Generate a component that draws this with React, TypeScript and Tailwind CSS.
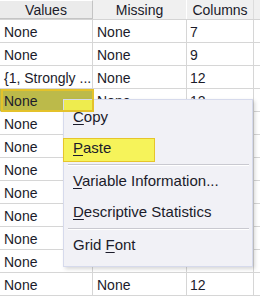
const rows = [
  ["None", "None", "7"],
  ["None", "None", "9"],
  ["{1, Strongly ...", "None", "12"],
  ["None", "None", "12"],
  ["None", "None", "12"],
  ["None", "None", "12"],
  ["None", "None", "12"],
  ["None", "None", "12"],
  ["None", "None", "12"],
  ["None", "None", "12"],
  ["None", "None", "12"],
  ["None", "None", "12"],
];

function MenuItem({ lead, rest, highlight }: { lead: string; rest: string; highlight?: boolean }) {
  return (
    <div className="relative flex h-[31px] items-center pl-[9px]">
      {highlight ? (
        <div className="absolute left-[-1px] top-[5px] h-[24px] w-[92px] border border-[#e6c52a] bg-[#f6f35a]" />
      ) : null}
      <span className="relative">
        <span className="underline decoration-1 underline-offset-2">{lead}</span>
        {rest}
      </span>
    </div>
  );
}

export default function App() {
  return (
    <div className="relative h-[300px] w-[260px] overflow-hidden bg-white font-['Liberation_Sans',Arial,sans-serif] text-[14px] text-[#1b1b2a]">
      <div className="flex h-[20px] border-b border-[#d4d4d4] bg-[#f0f0f0]">
        <div className="flex w-[93px] items-center justify-center border-r border-b border-[#c4c4c4] border-t border-t-white bg-[#ebebeb] pt-[1px]">
          Values
        </div>
        <div className="flex w-[94px] items-center justify-center border-r border-white pt-[1px]">Missing</div>
        <div className="flex w-[67px] items-center justify-center border-r border-[#dcdcdc] pt-[1px]">Columns</div>
        <div className="flex-1" />
      </div>

      {rows.map((r, i) => (
        <div key={i} className="flex h-[23px] border-b border-[#d6d6d6]">
          <div
            className={
              i === 3
                ? "flex w-[93px] items-center border-r border-[#d6d6d6] bg-[#bcba4a] pl-[4px] pt-[2px]"
                : "flex w-[93px] items-center border-r border-[#d6d6d6] pl-[4px] pt-[2px]"
            }
          >
            {r[0]}
          </div>
          <div className="flex w-[94px] items-center border-r border-[#d6d6d6] pl-[4px] pt-[2px]">{r[1]}</div>
          <div className="flex w-[67px] items-center border-r border-[#d6d6d6] pl-[3px] pt-[2px]">{r[2]}</div>
          <div className="flex-1" />
        </div>
      ))}

      {/* context menu */}
      <div className="absolute left-[63px] top-[99px] w-[190px] border border-[#d6daec] bg-[#f1f1f6] pt-[2px] pb-[5px] text-[15px] shadow-[2px_2px_4px_rgba(0,0,0,0.16)]">
        <MenuItem lead="C" rest="opy" />
        <MenuItem lead="P" rest="aste" highlight />
        <div className="ml-[4px] mr-[3px] h-[2px] border-t border-[#c9c9d0] border-b border-b-white" />
        <MenuItem lead="V" rest="ariable Information..." />
        <MenuItem lead="D" rest="escriptive Statistics" />
        <div className="ml-[4px] mr-[3px] h-[2px] border-t border-[#c9c9d0] border-b border-b-white" />
        <div className="relative flex h-[31px] items-center pl-[9px]">
          <span>
            Grid <span className="underline decoration-1 underline-offset-2">F</span>ont
          </span>
        </div>
      </div>

      {/* highlighted cell annotation over the menu */}
      <div className="absolute left-[1px] top-[89px] h-[23px] w-[93px] border-2 border-[#e4c22a]">
        <div className="absolute left-[61px] top-[9px] h-[10px] w-[28px] bg-[#eeec4e]" />
      </div>
    </div>
  );
}
